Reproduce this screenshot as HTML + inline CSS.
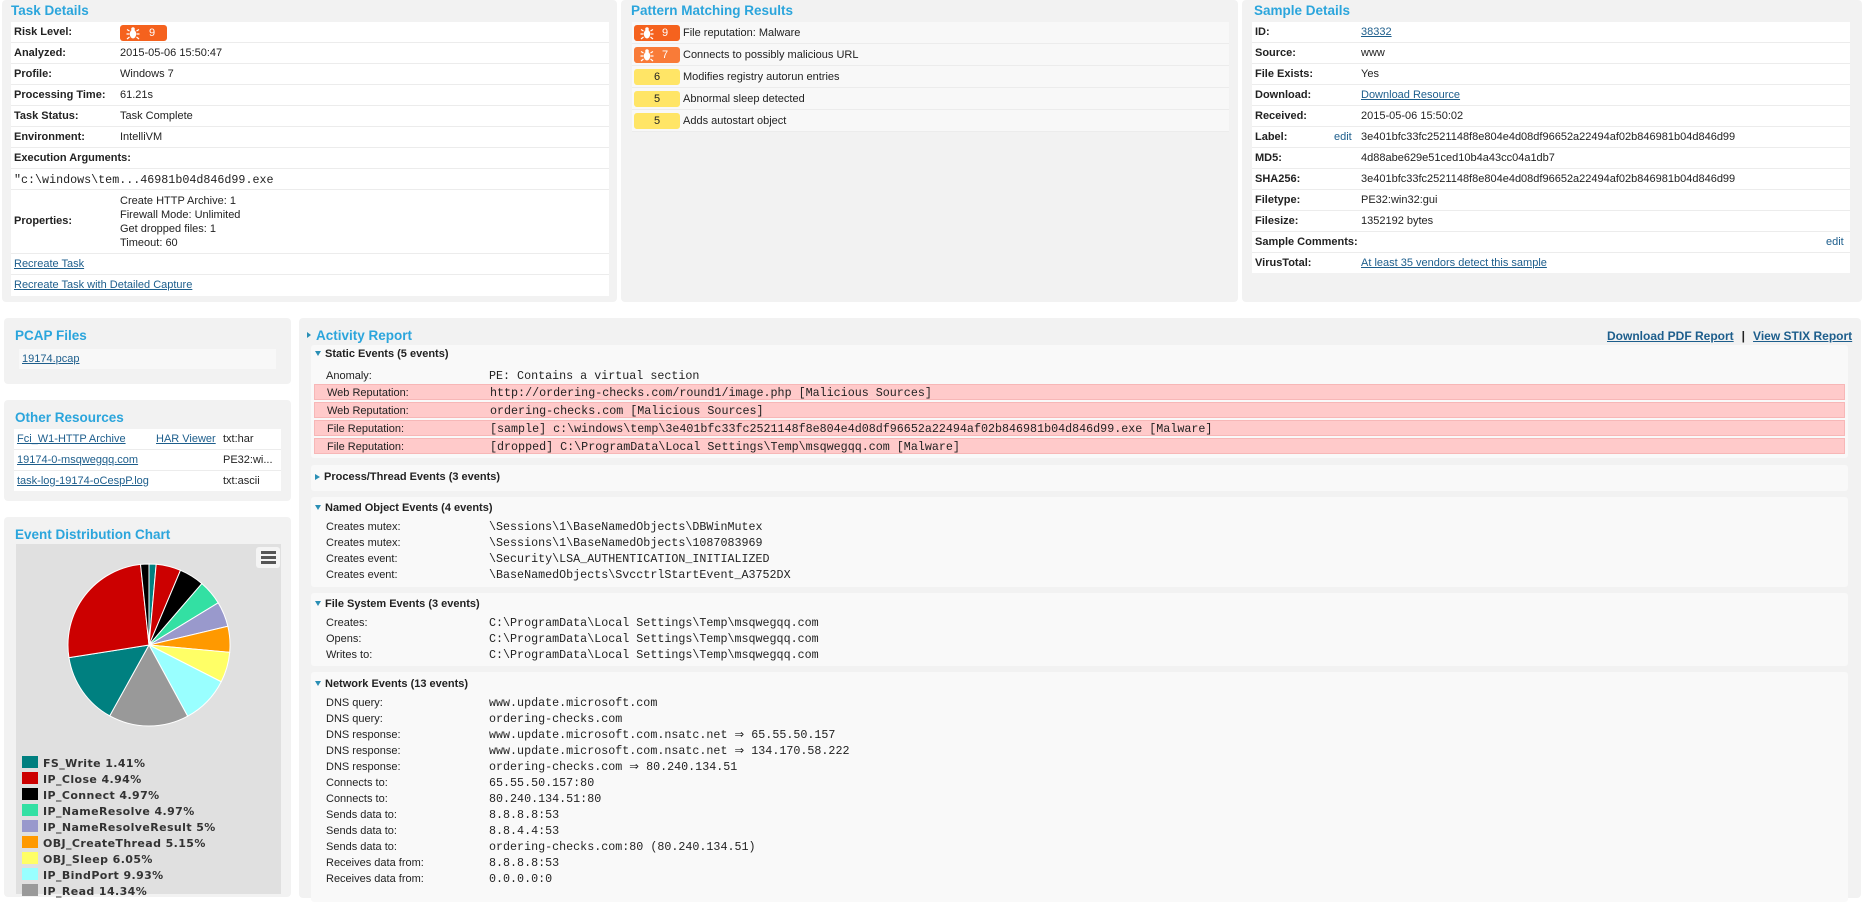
<!DOCTYPE html>
<html><head><meta charset="utf-8">
<style>
*{margin:0;padding:0;box-sizing:border-box}
body{width:1865px;height:887px;overflow:hidden;background:#fff;font-family:"Liberation Sans",Arial,sans-serif;font-size:11px;color:#222;position:relative}
.a{position:absolute}
.panel{position:absolute;background:#f2f2f2;border-radius:4px}
.title{position:absolute;color:#2ba5dc;font-size:13.5px;font-weight:bold;white-space:nowrap}
.row{position:absolute;background:#fff;border-bottom:1px solid #ececec}
.lb{position:absolute;font-weight:bold;white-space:nowrap}
.v{position:absolute;white-space:nowrap}
a,.lk{color:#1d5e8c;text-decoration:underline}
.mono{font-family:"Liberation Mono","Courier New",monospace;font-size:11.7px}
.badge{position:absolute;height:16px;border-radius:3px;color:#fff;font-size:11px;line-height:16px}
.badge svg{position:absolute;left:6px;top:1px}
.yb{background:#ffe566;color:#222;text-align:center}
.prow{position:absolute;background:#f8f8f8;border-bottom:1px solid #ececec;left:632px;width:597px;height:22px}
.box{position:absolute;background:#f9f9f9;left:311px;width:1537px;border-radius:3px}
.hd{position:absolute;font-weight:bold;white-space:nowrap}
.tri{display:inline-block;width:0;height:0;border-left:3px solid transparent;border-right:3px solid transparent;border-top:5px solid #2a8fb5;margin-right:4px;vertical-align:1px}
.trr{display:inline-block;width:0;height:0;border-top:3px solid transparent;border-bottom:3px solid transparent;border-left:5px solid #2a8fb5;margin-right:4px;vertical-align:0px}
.er{position:absolute;left:0;width:100%;height:16px;line-height:16px}
.er .l{position:absolute;left:15px}
.er .m{position:absolute;left:178px;font-family:"Liberation Mono","Courier New",monospace;font-size:11.7px;white-space:nowrap}
.pink{background:#ffcaca;border:1px solid #f7b7b7;left:3px;width:1531px}
.lg{position:absolute;left:22px;height:13px;white-space:nowrap;font-family:"DejaVu Sans",sans-serif;font-weight:bold;font-size:11px;color:#333;letter-spacing:0.4px;line-height:13px}
.lg i{display:inline-block;width:16px;height:12px;vertical-align:-1px;margin-right:5px}
</style></head><body>
<svg width="0" height="0" style="position:absolute"><defs><g id="bug" fill="#fff" stroke="#fff"><ellipse cx="7" cy="8" rx="3.2" ry="4.5" stroke="none"/><circle cx="7" cy="3" r="1.8" stroke="none"/><path d="M3.5 5L1 3.5M3.5 8H0.5M3.5 11L1 13M10.5 5L13 3.5M10.5 8H13.5M10.5 11L13 13" stroke-width="1.2" fill="none"/></g></defs></svg>

<!-- Task Details -->
<div class="panel" style="left:2px;top:0;width:615px;height:302px"></div>
<div class="title" style="left:11px;top:3px">Task Details</div>
<div class="row" style="left:11px;top:22px;width:598px;height:21px"></div>
<div class="row" style="left:11px;top:43px;width:598px;height:21px"></div>
<div class="row" style="left:11px;top:64px;width:598px;height:21px"></div>
<div class="row" style="left:11px;top:85px;width:598px;height:21px"></div>
<div class="row" style="left:11px;top:106px;width:598px;height:21px"></div>
<div class="row" style="left:11px;top:127px;width:598px;height:21px"></div>
<div class="row" style="left:11px;top:148px;width:598px;height:21px"></div>
<div class="row" style="left:11px;top:169px;width:598px;height:21px"></div>
<div class="row" style="left:11px;top:190px;width:598px;height:64px"></div>
<div class="row" style="left:11px;top:254px;width:598px;height:21px"></div>
<div class="row" style="left:11px;top:275px;width:598px;height:21px;border:0"></div>
<div class="lb" style="left:14px;top:26px">Risk Level:</div>
<div class="badge" style="left:120px;top:25px;width:47px;background:#f5621e"><svg width="14" height="14"><use href="#bug"/></svg><span style="position:absolute;left:29px">9</span></div>
<div class="lb" style="left:14px;top:47px">Analyzed:</div><div class="v" style="left:120px;top:47px">2015-05-06 15:50:47</div>
<div class="lb" style="left:14px;top:68px">Profile:</div><div class="v" style="left:120px;top:68px">Windows 7</div>
<div class="lb" style="left:14px;top:89px">Processing Time:</div><div class="v" style="left:120px;top:89px">61.21s</div>
<div class="lb" style="left:14px;top:110px">Task Status:</div><div class="v" style="left:120px;top:110px">Task Complete</div>
<div class="lb" style="left:14px;top:131px">Environment:</div><div class="v" style="left:120px;top:131px">IntelliVM</div>
<div class="lb" style="left:14px;top:152px">Execution Arguments:</div>
<div class="v mono" style="left:14px;top:173px">"c:\windows\tem...46981b04d846d99.exe</div>
<div class="lb" style="left:14px;top:215px">Properties:</div>
<div class="v" style="left:120px;top:194px;line-height:14px">Create HTTP Archive: 1<br>Firewall Mode: Unlimited<br>Get dropped files: 1<br>Timeout: 60</div>
<div class="v lk" style="left:14px;top:258px">Recreate Task</div>
<div class="v lk" style="left:14px;top:279px">Recreate Task with Detailed Capture</div>

<!-- Pattern Matching -->
<div class="panel" style="left:621px;top:0;width:617px;height:302px"></div>
<div class="title" style="left:631px;top:3px">Pattern Matching Results</div>
<div class="prow" style="top:22px"></div><div class="prow" style="top:44px"></div><div class="prow" style="top:66px"></div><div class="prow" style="top:88px"></div><div class="prow" style="top:110px"></div>
<div class="badge" style="left:634px;top:25px;width:46px;background:#f5621e"><svg width="14" height="14"><use href="#bug"/></svg><span style="position:absolute;left:28px">9</span></div>
<div class="badge" style="left:634px;top:47px;width:46px;background:#f97b38"><svg width="14" height="14"><use href="#bug"/></svg><span style="position:absolute;left:28px">7</span></div>
<div class="badge yb" style="left:634px;top:69px;width:46px">6</div>
<div class="badge yb" style="left:634px;top:91px;width:46px">5</div>
<div class="badge yb" style="left:634px;top:113px;width:46px">5</div>
<div class="v" style="left:683px;top:27px">File reputation: Malware</div>
<div class="v" style="left:683px;top:49px">Connects to possibly malicious URL</div>
<div class="v" style="left:683px;top:71px">Modifies registry autorun entries</div>
<div class="v" style="left:683px;top:93px">Abnormal sleep detected</div>
<div class="v" style="left:683px;top:115px">Adds autostart object</div>

<!-- Sample Details -->
<div class="panel" style="left:1242px;top:0;width:620px;height:302px"></div>
<div class="title" style="left:1254px;top:3px">Sample Details</div>
<div class="row" style="left:1252px;top:22px;width:598px;height:21px"></div>
<div class="row" style="left:1252px;top:43px;width:598px;height:21px"></div>
<div class="row" style="left:1252px;top:64px;width:598px;height:21px"></div>
<div class="row" style="left:1252px;top:85px;width:598px;height:21px"></div>
<div class="row" style="left:1252px;top:106px;width:598px;height:21px"></div>
<div class="row" style="left:1252px;top:127px;width:598px;height:21px"></div>
<div class="row" style="left:1252px;top:148px;width:598px;height:21px"></div>
<div class="row" style="left:1252px;top:169px;width:598px;height:21px"></div>
<div class="row" style="left:1252px;top:190px;width:598px;height:21px"></div>
<div class="row" style="left:1252px;top:211px;width:598px;height:21px"></div>
<div class="row" style="left:1252px;top:232px;width:598px;height:21px"></div>
<div class="row" style="left:1252px;top:253px;width:598px;height:20px;border:0"></div>
<div class="lb" style="left:1255px;top:26px">ID:</div><div class="v lk" style="left:1361px;top:26px">38332</div>
<div class="lb" style="left:1255px;top:47px">Source:</div><div class="v" style="left:1361px;top:47px">www</div>
<div class="lb" style="left:1255px;top:68px">File Exists:</div><div class="v" style="left:1361px;top:68px">Yes</div>
<div class="lb" style="left:1255px;top:89px">Download:</div><div class="v lk" style="left:1361px;top:89px">Download Resource</div>
<div class="lb" style="left:1255px;top:110px">Received:</div><div class="v" style="left:1361px;top:110px">2015-05-06 15:50:02</div>
<div class="lb" style="left:1255px;top:131px">Label:</div><div class="v" style="left:1334px;top:131px;color:#1d5e8c">edit</div><div class="v" style="left:1361px;top:131px">3e401bfc33fc2521148f8e804e4d08df96652a22494af02b846981b04d846d99</div>
<div class="lb" style="left:1255px;top:152px">MD5:</div><div class="v" style="left:1361px;top:152px">4d88abe629e51ced10b4a43cc04a1db7</div>
<div class="lb" style="left:1255px;top:173px">SHA256:</div><div class="v" style="left:1361px;top:173px">3e401bfc33fc2521148f8e804e4d08df96652a22494af02b846981b04d846d99</div>
<div class="lb" style="left:1255px;top:194px">Filetype:</div><div class="v" style="left:1361px;top:194px">PE32:win32:gui</div>
<div class="lb" style="left:1255px;top:215px">Filesize:</div><div class="v" style="left:1361px;top:215px">1352192 bytes</div>
<div class="lb" style="left:1255px;top:236px">Sample Comments:</div><div class="v" style="left:1826px;top:236px;color:#1d5e8c">edit</div>
<div class="lb" style="left:1255px;top:257px">VirusTotal:</div><div class="v lk" style="left:1361px;top:257px">At least 35 vendors detect this sample</div>

<!-- PCAP -->
<div class="panel" style="left:4px;top:318px;width:287px;height:66px"></div>
<div class="title" style="left:15px;top:328px">PCAP Files</div>
<div class="a" style="left:19px;top:349px;width:257px;height:20px;background:#f8f8f8"></div>
<div class="v lk" style="left:22px;top:353px">19174.pcap</div>

<!-- Other resources -->
<div class="panel" style="left:4px;top:400px;width:287px;height:101px"></div>
<div class="title" style="left:15px;top:410px">Other Resources</div>
<div class="row" style="left:14px;top:429px;width:267px;height:21px"></div>
<div class="row" style="left:14px;top:450px;width:267px;height:21px"></div>
<div class="row" style="left:14px;top:471px;width:267px;height:20px;border:0"></div>
<div class="v lk" style="left:17px;top:433px">Fci_W1-HTTP Archive</div><div class="v lk" style="left:156px;top:433px">HAR Viewer</div><div class="v" style="left:223px;top:433px">txt:har</div>
<div class="v lk" style="left:17px;top:454px">19174-0-msqwegqq.com</div><div class="v" style="left:223px;top:454px">PE32:wi...</div>
<div class="v lk" style="left:17px;top:475px">task-log-19174-oCespP.log</div><div class="v" style="left:223px;top:475px">txt:ascii</div>

<!-- Event chart -->
<div class="panel" style="left:4px;top:517px;width:287px;height:380px"></div>
<div class="title" style="left:15px;top:527px">Event Distribution Chart</div>
<div class="a" style="left:16px;top:544px;width:265px;height:350px;background:#e0e0e0"></div>
<div class="a" style="left:256px;top:547px;width:24px;height:21px;background:#f4f4f4;border-radius:3px"></div>
<div class="a" style="left:261px;top:551px;width:15px;height:3px;background:#555"></div>
<div class="a" style="left:261px;top:556px;width:15px;height:3px;background:#555"></div>
<div class="a" style="left:261px;top:561px;width:15px;height:3px;background:#555"></div>
<svg class="a" style="left:0;top:0" width="300" height="887">
<g transform="translate(149,645) scale(1.11)" stroke="#fff" stroke-width="0.9">
<path d="M0,0L0,-73A73,73 0 0 1 6.46,-72.72Z" fill="#008080"/>
<path d="M0,0L6.46,-72.72A73,73 0 0 1 28.36,-67.26Z" fill="#cc0000"/>
<path d="M0,0L28.36,-67.26A73,73 0 0 1 47.65,-55.31Z" fill="#000"/>
<path d="M0,0L47.65,-55.31A73,73 0 0 1 62.33,-38Z" fill="#33e0a3"/>
<path d="M0,0L62.33,-38A73,73 0 0 1 71.02,-16.87Z" fill="#9999cc"/>
<path d="M0,0L71.02,-16.87A73,73 0 0 1 72.7,6.59Z" fill="#ff9900"/>
<path d="M0,0L72.7,6.59A73,73 0 0 1 65.07,33.11Z" fill="#ffff66"/>
<path d="M0,0L65.07,33.11A73,73 0 0 1 34.84,64.15Z" fill="#99ffff"/>
<path d="M0,0L34.84,64.15A73,73 0 0 1 -35.39,63.85Z" fill="#999"/>
<path d="M0,0L-35.39,63.85A73,73 0 0 1 -72.1,11.42Z" fill="#008080"/>
<path d="M0,0L-72.1,11.42A73,73 0 0 1 -7.63,-72.6Z" fill="#cc0000"/>
<path d="M0,0L-7.63,-72.6A73,73 0 0 1 0,-73Z" fill="#000"/>
</g></svg>
<div class="lg" style="top:756px"><i style="background:#008080"></i>FS_Write 1.41%</div>
<div class="lg" style="top:772px"><i style="background:#cc0000"></i>IP_Close 4.94%</div>
<div class="lg" style="top:788px"><i style="background:#000"></i>IP_Connect 4.97%</div>
<div class="lg" style="top:804px"><i style="background:#33e0a3"></i>IP_NameResolve 4.97%</div>
<div class="lg" style="top:820px"><i style="background:#9999cc"></i>IP_NameResolveResult 5%</div>
<div class="lg" style="top:836px"><i style="background:#ff9900"></i>OBJ_CreateThread 5.15%</div>
<div class="lg" style="top:852px"><i style="background:#ffff66"></i>OBJ_Sleep 6.05%</div>
<div class="lg" style="top:868px"><i style="background:#99ffff"></i>IP_BindPort 9.93%</div>
<div class="lg" style="top:884px"><i style="background:#999"></i>IP_Read 14.34%</div>

<!-- Activity report -->
<div class="panel" style="left:299px;top:318px;width:1562px;height:580px"></div>
<div class="a" style="left:307px;top:332px;width:0;height:0;border-top:3px solid transparent;border-bottom:3px solid transparent;border-left:4px solid #2a8fb5"></div>
<div class="title" style="left:316px;top:328px">Activity Report</div>
<div class="v" style="left:1607px;top:329px;font-weight:bold;font-size:12px"><span class="lk">Download PDF Report</span><span style="color:#222;margin:0 8px">|</span><span class="lk">View STIX Report</span></div>

<div class="box" style="top:345px;height:113px">
 <div class="hd" style="left:4px;top:3px"><span class="tri"></span>Static Events (5 events)</div>
 <div class="er" style="top:23px"><span class="l">Anomaly:</span><span class="m">PE: Contains a virtual section</span></div>
 <div class="er pink" style="top:39px"><span class="l" style="left:12px">Web Reputation:</span><span class="m" style="left:175px">http://ordering-checks.com/round1/image.php [Malicious Sources]</span></div>
 <div class="er pink" style="top:57px"><span class="l" style="left:12px">Web Reputation:</span><span class="m" style="left:175px">ordering-checks.com [Malicious Sources]</span></div>
 <div class="er pink" style="top:75px"><span class="l" style="left:12px">File Reputation:</span><span class="m" style="left:175px">[sample] c:\windows\temp\3e401bfc33fc2521148f8e804e4d08df96652a22494af02b846981b04d846d99.exe [Malware]</span></div>
 <div class="er pink" style="top:93px"><span class="l" style="left:12px">File Reputation:</span><span class="m" style="left:175px">[dropped] C:\ProgramData\Local Settings\Temp\msqwegqq.com [Malware]</span></div>
</div>
<div class="box" style="top:465px;height:26px">
 <div class="hd" style="left:4px;top:6px"><span class="trr"></span>Process/Thread Events (3 events)</div>
</div>
<div class="box" style="top:497px;height:90px">
 <div class="hd" style="left:4px;top:5px"><span class="tri"></span>Named Object Events (4 events)</div>
 <div class="er" style="top:22px"><span class="l">Creates mutex:</span><span class="m">\Sessions\1\BaseNamedObjects\DBWinMutex</span></div>
 <div class="er" style="top:38px"><span class="l">Creates mutex:</span><span class="m">\Sessions\1\BaseNamedObjects\1087083969</span></div>
 <div class="er" style="top:54px"><span class="l">Creates event:</span><span class="m">\Security\LSA_AUTHENTICATION_INITIALIZED</span></div>
 <div class="er" style="top:70px"><span class="l">Creates event:</span><span class="m">\BaseNamedObjects\SvcctrlStartEvent_A3752DX</span></div>
</div>
<div class="box" style="top:593px;height:73px">
 <div class="hd" style="left:4px;top:5px"><span class="tri"></span>File System Events (3 events)</div>
 <div class="er" style="top:22px"><span class="l">Creates:</span><span class="m">C:\ProgramData\Local Settings\Temp\msqwegqq.com</span></div>
 <div class="er" style="top:38px"><span class="l">Opens:</span><span class="m">C:\ProgramData\Local Settings\Temp\msqwegqq.com</span></div>
 <div class="er" style="top:54px"><span class="l">Writes to:</span><span class="m">C:\ProgramData\Local Settings\Temp\msqwegqq.com</span></div>
</div>
<div class="box" style="top:672px;height:230px">
 <div class="hd" style="left:4px;top:6px"><span class="tri"></span>Network Events (13 events)</div>
 <div class="er" style="top:23px"><span class="l">DNS query:</span><span class="m">www.update.microsoft.com</span></div>
 <div class="er" style="top:39px"><span class="l">DNS query:</span><span class="m">ordering-checks.com</span></div>
 <div class="er" style="top:55px"><span class="l">DNS response:</span><span class="m">www.update.microsoft.com.nsatc.net &#x21D2; 65.55.50.157</span></div>
 <div class="er" style="top:71px"><span class="l">DNS response:</span><span class="m">www.update.microsoft.com.nsatc.net &#x21D2; 134.170.58.222</span></div>
 <div class="er" style="top:87px"><span class="l">DNS response:</span><span class="m">ordering-checks.com &#x21D2; 80.240.134.51</span></div>
 <div class="er" style="top:103px"><span class="l">Connects to:</span><span class="m">65.55.50.157:80</span></div>
 <div class="er" style="top:119px"><span class="l">Connects to:</span><span class="m">80.240.134.51:80</span></div>
 <div class="er" style="top:135px"><span class="l">Sends data to:</span><span class="m">8.8.8.8:53</span></div>
 <div class="er" style="top:151px"><span class="l">Sends data to:</span><span class="m">8.8.4.4:53</span></div>
 <div class="er" style="top:167px"><span class="l">Sends data to:</span><span class="m">ordering-checks.com:80 (80.240.134.51)</span></div>
 <div class="er" style="top:183px"><span class="l">Receives data from:</span><span class="m">8.8.8.8:53</span></div>
 <div class="er" style="top:199px"><span class="l">Receives data from:</span><span class="m">0.0.0.0:0</span></div>
</div>
</body></html>
